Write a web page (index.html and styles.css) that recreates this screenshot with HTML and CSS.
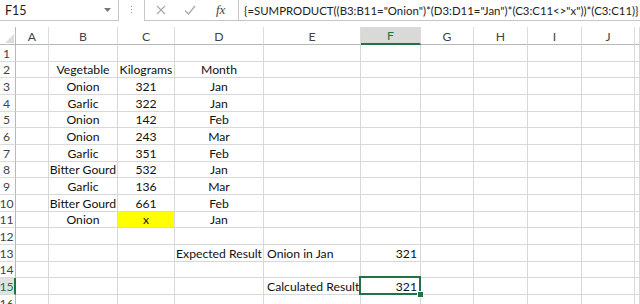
FILE: index.html
```html
<!DOCTYPE html>
<html>
<head>
    <title>SUMPRODUCT</title>
    <link rel="stylesheet" href="styles.css">
</head>
<body>
    <div class="formula-bar">
        <div class="name-box">
            <span>F15</span>
            <svg class="caret" width="7" height="4" viewBox="0 0 7 4"><polygon points="0,0 7,0 3.5,4" fill="#777"/></svg>
        </div>
        <div class="grip"><i></i><i></i><i></i></div>
        <div class="fx-buttons">
            <svg width="10" height="10" viewBox="0 0 10 10"><path d="M1 1 L9 9 M9 1 L1 9" stroke="#a8a8a8" stroke-width="1.1" fill="none"/></svg>
            <svg width="12" height="10" viewBox="0 0 12 10"><path d="M1 5.5 L4.5 9 L11 1" stroke="#a8a8a8" stroke-width="1.2" fill="none"/></svg>
            <span class="fx">fx</span>
        </div>
        <div class="formula">{=SUMPRODUCT((B3:B11="Onion")*(D3:D11="Jan")*(C3:C11&lt;&gt;"x"))*(C3:C11)}</div>
    </div>

    <div class="sheet">
        <div class="corner"><svg width="9" height="9" viewBox="0 0 9 9"><polygon points="9,0 9,9 0,9" fill="#dcdcdc"/></svg></div>
        <div class="ch">A</div><div class="ch">B</div><div class="ch">C</div><div class="ch">D</div><div class="ch">E</div>
        <div class="ch sel-col">F</div><div class="ch">G</div><div class="ch">H</div><div class="ch">I</div><div class="ch">J</div><div class="ch"></div>

        <div class="rh">1</div><div></div><div></div><div></div><div></div><div></div><div></div><div></div><div></div><div></div><div></div><div></div>
        <div class="rh">2</div><div></div><div>Vegetable</div><div>Kilograms</div><div>Month</div><div></div><div></div><div></div><div></div><div></div><div></div><div></div>
        <div class="rh">3</div><div></div><div>Onion</div><div>321</div><div>Jan</div><div></div><div></div><div></div><div></div><div></div><div></div><div></div>
        <div class="rh">4</div><div></div><div>Garlic</div><div>322</div><div>Jan</div><div></div><div></div><div></div><div></div><div></div><div></div><div></div>
        <div class="rh">5</div><div></div><div>Onion</div><div>142</div><div>Feb</div><div></div><div></div><div></div><div></div><div></div><div></div><div></div>
        <div class="rh">6</div><div></div><div>Onion</div><div>243</div><div>Mar</div><div></div><div></div><div></div><div></div><div></div><div></div><div></div>
        <div class="rh">7</div><div></div><div>Garlic</div><div>351</div><div>Feb</div><div></div><div></div><div></div><div></div><div></div><div></div><div></div>
        <div class="rh">8</div><div></div><div>Bitter Gourd</div><div>532</div><div>Jan</div><div></div><div></div><div></div><div></div><div></div><div></div><div></div>
        <div class="rh">9</div><div></div><div>Garlic</div><div>136</div><div>Mar</div><div></div><div></div><div></div><div></div><div></div><div></div><div></div>
        <div class="rh">10</div><div></div><div>Bitter Gourd</div><div>661</div><div>Feb</div><div></div><div></div><div></div><div></div><div></div><div></div><div></div>
        <div class="rh">11</div><div></div><div>Onion</div><div class="yellow">x</div><div>Jan</div><div></div><div></div><div></div><div></div><div></div><div></div><div></div>
        <div class="rh">12</div><div></div><div></div><div></div><div></div><div></div><div></div><div></div><div></div><div></div><div></div><div></div>
        <div class="rh">13</div><div></div><div></div><div></div><div>Expected Result</div><div class="left">Onion in Jan</div><div class="right">321</div><div></div><div></div><div></div><div></div><div></div>
        <div class="rh">14</div><div></div><div></div><div></div><div></div><div></div><div></div><div></div><div></div><div></div><div></div><div></div>
        <div class="rh sel-row">15</div><div></div><div></div><div></div><div></div><div class="left">Calculated Result</div><div class="right active">321</div><div></div><div></div><div></div><div></div><div></div>
        <div class="rh">16</div><div></div><div></div><div></div><div></div><div></div><div></div><div></div><div></div><div></div><div></div><div></div>
    </div>
</body>
</html>
```

FILE: styles.css
```css
body {
    margin: 0;
    height: 304px;
    overflow: hidden;
    background-color: #fff;
    font-family: Lato, "Liberation Sans", sans-serif;
    color: #111;
}

/* formula bar */
.formula-bar {
    display: flex;
    height: 21px;
    font-size: 12.5px;
}

.name-box {
    flex: 0 0 119px;
    display: flex;
    align-items: center;
    justify-content: space-between;
    padding: 0 7px 0 5px;
    box-sizing: border-box;
    border-right: 1px solid #c6c6c6;
    border-bottom: 1px solid #c6c6c6;
    color: #222;
}

.grip {
    flex: 0 0 25px;
    display: flex;
    flex-direction: column;
    align-items: center;
    justify-content: center;
    gap: 2px;
    padding-bottom: 3px;
}

.grip i {
    width: 1px;
    height: 1px;
    background-color: #999;
}

.fx-buttons {
    flex: 0 0 94px;
    display: flex;
    align-items: center;
    padding-left: 11px;
    box-sizing: border-box;
    border-left: 1px solid #c6c6c6;
    border-bottom: 1px solid #c6c6c6;
}

.fx-buttons svg + svg {
    margin-left: 18px;
}

.fx {
    font-family: "Liberation Serif", serif;
    font-style: italic;
    font-size: 13px;
    color: #444;
    margin-left: 20px;
}

.formula {
    flex: 1;
    min-width: 0;
    overflow: hidden;
    padding-left: 5px;
    display: flex;
    align-items: center;
    white-space: nowrap;
    font-size: 11.4px;
    border-left: 1px solid #c6c6c6;
    border-bottom: 1px solid #c6c6c6;
    color: #222;
}

/* grid */
.sheet {
    display: grid;
    grid-template-columns: 16px 33px 69px 57px 89px 97px 60px 53px 54px 54px 53px 1fr;
    grid-template-rows: 18px repeat(16, 16.67px);
    margin-top: 6px;
    font-size: 12.2px;
}

.sheet > div {
    display: flex;
    align-items: center;
    justify-content: center;
    white-space: nowrap;
    padding-top: 1px;
    border-right: 1px solid #d8d8d8;
    border-bottom: 1px solid #d8d8d8;
}

.sheet > .corner {
    align-items: flex-end;
    justify-content: flex-end;
    padding: 0 1px 1px 0;
    border-right: 1px solid #b8b8b8;
    border-bottom: 1px solid #b8b8b8;
}

.sheet > .ch {
    color: #444;
    border-bottom: 1px solid #b8b8b8;
    border-right: 1px solid #dcdcdc;
}

.sheet > .rh {
    color: #444;
    padding-right: 2px;
    border-right: 1px solid #b8b8b8;
    border-bottom: 1px solid #dcdcdc;
}

.sheet > .sel-col {
    background-color: #d9d9d9;
    color: #217346;
    border-bottom: 2px solid #217346;
}

.sheet > .sel-row {
    background-color: #e1e1e1;
    color: #217346;
    padding-right: 1px;
    border-right: 2px solid #217346;
}

.sheet > .left {
    justify-content: flex-start;
    padding-left: 3px;
}

.sheet > .right {
    justify-content: flex-end;
    padding-right: 3px;
}

.sheet > .yellow {
    background-color: #ffff00;
}

.active {
    position: relative;
}

.active::before {
    content: "";
    position: absolute;
    top: -2px;
    left: -2px;
    right: -1px;
    bottom: -1px;
    border: 2px solid #217346;
}

.active::after {
    content: "";
    position: absolute;
    right: -4px;
    bottom: -4px;
    width: 5px;
    height: 5px;
    background-color: #217346;
    border: 1px solid #fff;
}
```
